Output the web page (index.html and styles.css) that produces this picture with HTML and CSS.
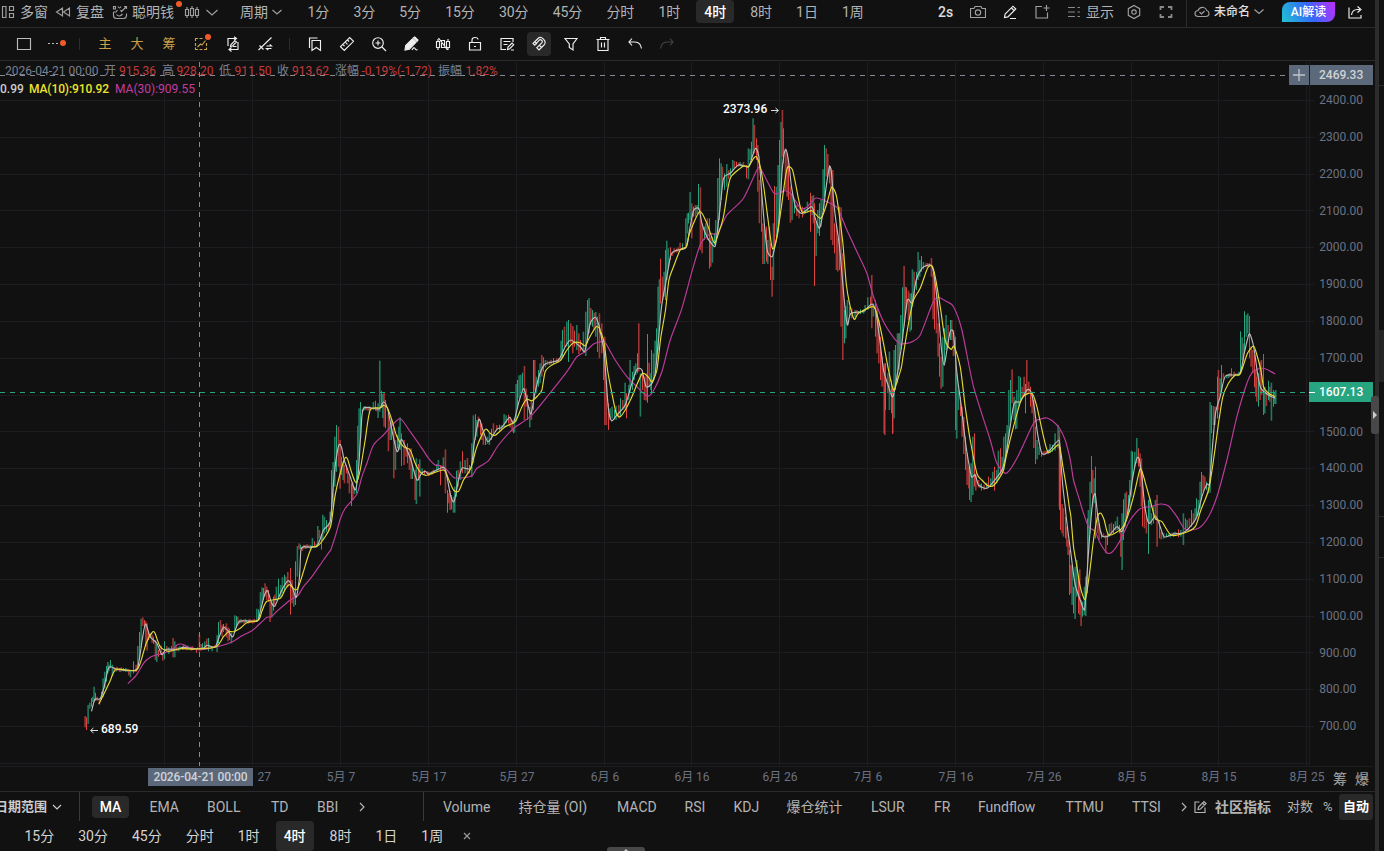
FILE: index.html
```html
<!DOCTYPE html>
<html lang="zh-CN">
<head>
<meta charset="utf-8">
<title>K线图</title>
<link rel="stylesheet" href="styles.css">
</head>
<body>
<div class="app">
<main class="main">
  <header class="topbar">
    <div class="tools-left">
      <svg class="ic dim" viewBox="0 0 16 16"><path d="M2.500 2.500h3.500v11H2.500zM9.500 2.500h4v4h-4zM9.500 9.500h4v4h-4z"/></svg>
      <span>多窗</span>
      <svg class="ic dim" viewBox="0 0 16 16"><path d="M7.500 4v8L1.500 8zM14.500 4v8L8.500 8z"/></svg>
      <span>复盘</span>
      <svg class="ic dim" viewBox="0 0 16 16"><path d="M1.500 8v3.500q0 3 3 3h7q3 0 3-3V9.500M1.500 8h2.500l1.500-2M4.500 10.500q1.500 1.800 3 1.500t3-2M1.500 2.500h2v2.500h-2zM6 2.500q1.500 3 3 0M12 2.500h2.500V5M14.500 2.500L9.500 7.500l-1-1.500"/></svg>
      <span class="smart">聪明钱<i class="dot"></i></span>
      <svg class="ic dim" viewBox="0 0 16 16"><path d="M1.500 5.500h3v6h-3zM6.500 4.500h3v7h-3zM11.500 5.500h3v6h-3zM3 3v2.500M3 11.500V14M8 2v2.500M8 11.500V14M13 3v2.500M13 11.500V14"/></svg>
      <svg class="ic dim" viewBox="0 0 16 16"><path d="M2.500 6l5.500 5 5.500-5"/></svg>
      <span>周期</span>
      <svg class="ic dim" viewBox="0 0 16 16"><path d="M3.500 6l4.500 4 4.500-4"/></svg>
    </div>
    <nav class="periods">
      <span>1分</span><span>3分</span><span>5分</span><span>15分</span><span>30分</span><span>45分</span><span>分时</span><span>1时</span><span class="on">4时</span><span>8时</span><span>1日</span><span>1周</span>
    </nav>
    <div class="tools-right">
      <b class="sec">2s</b>
      <svg class="ic dim" viewBox="0 0 16 16"><path d="M.500 4.500h3.500l1-2h6l1 2h3.500v9H.500z"/><circle cx="8" cy="8.500" r="2.700"/></svg>
      <svg class="ic lit" viewBox="0 0 16 16"><path d="M2.500 13.500l.6-3.400L11 2.200l2.800 2.800-7.900 7.900zM9.500 4l2.500 2.500M8 14.500h6"/></svg>
      <svg class="ic dim" viewBox="0 0 16 16"><path d="M8 2.500H2v11.500h11.500V8.500M12.500 1v6M9.500 4h6"/></svg>
      <svg class="ic faint" viewBox="0 0 16 16"><path d="M2 3.500h7M2 8h7M2 12.500h7M11.500 3.500h2.500M11.500 8h2.500M11.500 12.500h2.500"/></svg>
      <span>显示</span>
      <svg class="ic dim" viewBox="0 0 16 16"><path d="M8 1.500l5.700 3.200v6.600L8 14.500l-5.700-3.200V4.700z"/><circle cx="8" cy="8" r="2.200"/></svg>
      <svg class="ic faint thick" viewBox="0 0 16 16"><path d="M2.500 6V3H6M10 3h3.500v3M13.500 10v3H10M6 13H2.500v-3"/></svg>
    </div>
    <div class="account">
      <svg class="ic dim" viewBox="0 0 16 16"><path d="M4.500 12.500C2 12.500 1 11 1 9.500S2.300 6.800 4 6.500C5 4 7 3 9.500 3.500s3 2 3.200 3C14.500 7 15 8 15 9.500s-1.200 3-3.500 3zM5.500 8l2 2 3-3"/></svg>
      <span class="name">未命名</span>
      <svg class="ic dim" viewBox="0 0 16 16"><path d="M3.500 5.500l4.500 4 4.500-4"/></svg>
      <b class="ai">AI解读</b>
      <svg class="ic lit" viewBox="0 0 16 16"><path d="M2 3.500v10.500h12v-3M4.500 11c.5-4 3-5.500 6-5.500H13M10.500 2.500l3.500 3-3.500 3"/></svg>
    </div>
  </header>

  <div class="drawbar">
    <div class="group">
      <i><svg class="ic" viewBox="0 0 16 16"><path d="M1.500 2.500h13v11h-13z"/></svg></i>
      <i class="more"><svg class="ic" viewBox="0 0 16 16"><path d="M0 7.500h2M4 7.500h2M8 7.500h2"/></svg><em class="dot"></em></i>
    </div>
    <s></s>
    <div class="group gold">
      <i>主</i><i>大</i><i>筹</i>
      <i class="badge"><svg class="ic" viewBox="0 0 16 16"><path d="M5 2.500H2.500V5M2.500 7v3M2.500 11.500v2H5M6.500 13.500h3M11 13.500h2.500v-2M13.500 10V7M6.500 2.500h3M4.500 11l3-3 1.500 1 3.500-4.500"/></svg><em class="dot"></em></i>
      <i><svg class="ic white" viewBox="0 0 16 16"><path d="M3 10V2.500h8M9 .700l2.500 1.800L9 4.300M13 6v7.500H4M6.500 11.500L4 13.500l2.500 2M5.500 10.500l.5-2 4-4 1.500 1.500-4 4zM8 10.500h3.500"/></svg></i>
      <i><svg class="ic white" viewBox="0 0 16 16"><path d="M1.500 14L14.500 1.500M2.500 9.500l4 4M9.500 10h5l-1.800-1.500M14.500 12.500h-5l1.800 1.500"/></svg></i>
    </div>
    <s class="wide"></s>
    <div class="group white">
      <i><svg class="ic" viewBox="0 0 16 16"><path d="M5 4.500h8.500v10L9.300 11.500 5 14.500zM2.500 12V2h8"/></svg></i>
      <i><svg class="ic" viewBox="0 0 16 16"><path d="M1.500 10.700l9.200-9.200 3.800 3.800-9.200 9.200zM4 8.500l1.500 1.500M6.300 6.200l2.200 2.200M8.500 4l1.500 1.500"/></svg></i>
      <i><svg class="ic" viewBox="0 0 16 16"><circle cx="7" cy="7" r="5.300"/><path d="M11 11l4 4M4.500 7h5M7 4.500v5"/></svg></i>
      <i><svg class="ic" viewBox="0 0 16 16"><path class="solid" d="M2 14l.7-4.500L9.500 2.700 13 6.200l-6.600 6.900zM10.500 1.800l1.300-.8 3.200 3-1 1.300z"/><path d="M9 14q2-3.500 3-1.500t2.500 1"/></svg></i>
      <i><svg class="ic" viewBox="0 0 16 16"><path d="M1.500 5.500h3v6h-3zM6.500 4.500h3v7h-3zM11.500 5.500h3v6h-3zM3 3v2.500M3 11.500V14M13 3v2.500M13 11.500V14M3.500 2l9 12"/></svg></i>
      <i><svg class="ic" viewBox="0 0 16 16"><path d="M2.500 6.500h11v7.500h-11zM5 6.500V4q0-2.500 3-2.500t3 2M7 10.500h2"/></svg></i>
      <i><svg class="ic" viewBox="0 0 16 16"><path d="M14 6V2.500H2v11h5M4.500 5.500h7M4.500 8.500h4M8.500 13.500l.5-2.500 4-4 1.700 1.700-4 4zM12 14h3"/></svg></i>
      <i class="on"><svg class="ic" viewBox="0 0 16 16"><path d="M2 7.500l5-5c3-3 9.500 2.500 6 6.500l-5 5-2.200-2.200 5-5c1.500-2-1-4-2.600-2.600l-4.500 5zM3.800 5.700L6 8M8.500 9.500l2.200 2.200"/></svg></i>
      <i><svg class="ic" viewBox="0 0 16 16"><path d="M2 2.500h12L10 8v6L6.300 11.500V8z"/></svg></i>
      <i><svg class="ic" viewBox="0 0 16 16"><path d="M1.500 3.500h13M5.500 3.500v-2h5v2M3 3.500v11h10v-11M6.500 6.500v5M9.500 6.500v5"/></svg></i>
      <i><svg class="ic" viewBox="0 0 16 16"><path d="M5 2.500L2 6l3 3.500M2 6h6q5.500 0 6.500 6.500"/></svg></i>
      <i class="off"><svg class="ic" viewBox="0 0 16 16"><path d="M11 2.500L14 6l-3 3.500M14 6H8q-5.500 0-6.500 6.500"/></svg></i>
    </div>
  </div>

  <svg class="chart" id="chart" viewBox="0 61 1375 730" width="1375" height="730">
    <g id="grid" class="grid"></g>
    <g id="bars"></g>
    <g id="lines" class="lines"></g>
    <path class="cross" d="M0 75.500H1289M199.500 62V766"/>
    <path class="last" d="M0 392.500H1309"/>
    <g class="legend">
      <text x="5" y="75">2026-04-21 00:00</text>
      <text x="104" y="75">开</text><text class="red" x="119" y="75">915.36</text>
      <text x="162" y="75">高</text><text class="red" x="176.500" y="75">928.20</text>
      <text x="219" y="75">低</text><text class="red" x="234.500" y="75">911.50</text>
      <text x="277" y="75">收</text><text class="red" x="292" y="75">913.62</text>
      <text x="335" y="75">涨幅</text><text class="red" x="361.500" y="75">-0.19%(-1.72)</text>
      <text x="438" y="75">振幅</text><text class="red" x="465.500" y="75">1.82%</text>
      <text class="ma5" x="0" y="93">0.99</text>
      <text class="ma10" x="29" y="93" textLength="80">MA(10):910.92</text>
      <text class="ma30" x="115" y="93" textLength="80">MA(30):909.55</text>
    </g>
    <g class="peak">
      <text x="723" y="113">2373.96</text><path d="M771 110.500h7M775.500 108l3 2.500-3 2.500"/>
      <text x="101" y="733">689.59</text><path d="M98 730.500h-7M93.500 728l-3 2.500 3 2.500"/>
    </g>
    <g id="axis" class="axis"></g>
    <path class="tag" d="M1289 65h20v20h-20zM1310 65h63v20h-63z"/>
    <path class="plus" d="M1293 75h12M1299 69v12"/>
    <text class="tagtext" x="1319" y="79">2469.33</text>
    <path class="lasttag" d="M1309 382h64v20h-64z"/>
    <path class="tick" d="M1309 392.500h6"/>
    <text class="lasttext" x="1319" y="396">1607.13</text>
    <path class="tag" d="M148 768h105v18H148z"/>
    <text class="tagtext" x="153.500" y="781" textLength="94">2026-04-21 00:00</text>
    <g class="corner"><text x="1333" y="783.500">筹</text><text x="1355" y="783.500">爆</text></g>
  </svg>

  <div class="indicators">
    <div class="range"><span>日期范围</span><svg class="ic" viewBox="0 0 16 16"><path d="M4 6l4 4 4-4"/></svg></div>
    <div class="overlays">
      <b class="on">MA</b><span>EMA</span><span>BOLL</span><span>TD</span><span>BBI</span><svg class="ic" viewBox="0 0 16 16"><path d="M6 4l4 4-4 4"/></svg>
    </div>
    <div class="subs">
      <span>Volume</span><span>持仓量 (OI)</span><span>MACD</span><span>RSI</span><span>KDJ</span><span>爆仓统计</span><span>LSUR</span><span>FR</span><span>Fundflow</span><span>TTMU</span><span>TTSI</span>
      <svg class="ic" viewBox="0 0 16 16"><path d="M6 4l4 4-4 4"/></svg>
      <svg class="ic" viewBox="0 0 16 16"><path d="M7.500 3H3v10.500h10V8.500M6 10.500l.5-2.500L12 2.500l2 2L8.500 10zM10.500 4l2 2"/></svg>
      <b>社区指标</b><span class="small">对数</span><span class="small">%</span><b class="auto">自动</b>
    </div>
  </div>

  <footer class="bottombar">
    <nav class="periods">
      <span>15分</span><span>30分</span><span>45分</span><span>分时</span><span>1时</span><span class="on">4时</span><span>8时</span><span>1日</span><span>1周</span>
    </nav>
    <svg class="ic close" viewBox="0 0 16 16"><path d="M5 5l6 6M11 5l-6 6"/></svg>
    <div class="pull"></div>
  </footer>
</main>
<div class="scroll"><div class="collapse"></div></div>
<aside class="side"><div class="s1"></div><div class="s2"></div><div class="s3"></div><div class="s4"></div><div class="s5"></div></aside>
</div>
<script src="chart.js"></script>
</body>
</html>
```

FILE: styles.css
```css
* { box-sizing: border-box; }
body { margin: 0; background: #111; color: #b4b4b4; font: 14px/20px Roboto, "Noto Sans CJK SC", sans-serif; overflow: hidden; }
i, em { font-style: normal; }
s { text-decoration: none; }
.app { display: flex; width: 1384px; height: 851px; }
.main { width: 1375px; height: 851px; display: flex; flex-direction: column; overflow: hidden; }
.ic { width: 16px; height: 16px; flex: none; fill: none; stroke: currentColor; stroke-width: 1.15; display: block; }
.ic .solid { fill: currentColor; }
.dim { color: #a0a0a0; }
.faint { color: #888; }
.lit { color: #eee; }
.thick { stroke-width: 1.8; }
.dot { position: absolute; width: 6px; height: 6px; border-radius: 50%; background: #f05a28; }

.topbar { height: 28px; flex: none; border-bottom: 1px solid #2b2b2b; display: flex; white-space: nowrap; }
.tools-left { width: 299.500px; height: 24px; display: grid; align-items: center; grid-template-columns: 20px 35px 21px 36px 20px 52px 20px 36px 29px 20px; }
.smart { position: relative; }
.smart .dot { left: 44px; top: -1px; }
.periods { display: flex; gap: 8px; }
.periods span { padding: 0 8px; height: 24px; line-height: 24px; border-radius: 4px; }
.periods .on { color: #fff; background: #292929; font-weight: 500; }
.topbar .periods .on { height: 23px; }
.tools-right { margin-left: auto; width: 248px; height: 24px; display: grid; align-items: center; grid-template-columns: 32px 32px 32px 32px 20px 40px 32px 16px; }
.sec { color: #ddd; font-weight: 500; }
.account { width: 189px; height: 27px; padding: 0 0 3px 7px; border-left: 1px solid #2b2b2b; display: grid; align-items: center; grid-template-columns: 20px 37px 31px 65px 16px; }
.name { font-size: 12px; color: #e0e0e0; font-weight: 500; }
.ai { width: 53px; height: 20px; line-height: 20px; text-align: center; color: #fff; font-size: 12px; font-weight: 500; border-radius: 8px 0 8px 0; background: linear-gradient(65deg, #20c4d0, #3568fa 52%, #c22cff); }

.drawbar { height: 33px; flex: none; border-bottom: 1px solid #2b2b2b; display: flex; align-items: center; padding-left: 12px; }
.group { display: flex; gap: 8px; color: #bbb; }
.group i { width: 24px; height: 24px; display: flex; align-items: center; justify-content: center; border-radius: 4px; position: relative; font-size: 13px; }
.drawbar s { flex: none; width: 1px; height: 12px; background: #2c2c2c; margin: 0 13px 0 11px; }
.drawbar .wide { margin-left: 12px; }
.gold { color: #c9a14a; }
.white { color: #eee; }
.group .on { background: #292929; }
.group .off { color: #444; }
.more .dot { left: 16px; top: 8px; }
.badge .dot { left: 16px; top: 2px; }

.chart { display: block; flex: none; font: 12px Roboto, "Noto Sans CJK SC", sans-serif; }
.grid { stroke: #1d1d21; fill: none; shape-rendering: crispEdges; }
.lines { fill: none; stroke-width: 1.15; stroke-linejoin: round; }
.lines .w { stroke: #bcbcbc; }
.lines .y { stroke: #e4da34; }
.lines .p { stroke: #bd3c9d; }
.up { fill: #25a47e; }
.down { fill: #dd4340; }
.soft { opacity: .7; }
.cross { stroke: #858994; stroke-dasharray: 5 5; fill: none; shape-rendering: crispEdges; }
.last { stroke: #25a47e; stroke-dasharray: 5 5; shape-rendering: crispEdges; }
.legend { fill: #7b8090; }
.legend .red { fill: #c13c3c; }
.legend .ma5 { fill: #ccc; font-weight: 500; }
.legend .ma10 { fill: #eee32d; font-weight: 500; }
.legend .ma30 { fill: #c33ca2; }
.peak { fill: #fff; font-weight: 500; }
.peak path { fill: none; stroke: #ddd; }
.axis { fill: #6b7283; }
.tag { fill: #5c697b; }
.plus { stroke: #c0c5ca; stroke-width: 1.3; }
.tagtext { fill: #ced2d7; font-weight: 500; }
.lasttag { fill: #26a580; }
.tick { stroke: #fff; }
.lasttext { fill: #fff; font-weight: 500; }
.corner { fill: #999; font-size: 14px; font-weight: 500; }

.indicators { height: 30px; flex: none; border-top: 1px solid #2b2b2b; display: flex; white-space: nowrap; overflow: hidden; }
.range { width: 80px; flex: none; border-right: 1px solid #3a3a3a; display: flex; align-items: center; justify-content: flex-end; font-size: 13px; font-weight: 700; color: #ccc; padding-right: 14px; gap: 2px; }
.overlays { width: 344px; border-right: 1px solid #3a3a3a; display: grid; align-items: center; grid-template-columns: 57.500px 57.500px 64px 46px 37px 16px; padding-left: 12px; }
.overlays .on { background: #292929; color: #fff; font-weight: 500; border-radius: 4px; width: 37px; height: 22px; line-height: 22px; text-align: center; }
.subs { display: grid; align-items: center; grid-template-columns: 75.500px 98.500px 67.500px 49px 53px 84.500px 63px 44px 87.500px 66.500px 44px 16px 23px 72px 36px 16px 34px; padding-left: 19px; }
.subs b { font-weight: 600; }
.subs .small { font-size: 13px; }
.subs .auto { background: #292929; color: #fff; width: 34px; height: 26px; line-height: 26px; text-align: center; border-radius: 3px; font-size: 13px; }

.bottombar { height: 30px; display: flex; align-items: center; padding-left: 16.500px; position: relative; color: #d4d4d4; }
.bottombar .periods span { height: 30px; line-height: 30px; }
.close { margin-left: 8px; color: #999; }
.pull { position: absolute; left: 607px; top: 26px; width: 38px; height: 6px; background: #484848; border-radius: 3px 3px 0 0; }
.pull::after { content: ""; position: absolute; left: 16px; top: 2px; border: 3px solid transparent; border-top: 0; border-bottom-color: #ccc; }
.scroll { width: 4px; background: #2c2c2c; position: relative; }
.collapse { position: absolute; left: -4px; top: 396px; width: 8px; height: 38px; background: #484848; border-radius: 3px; }
.collapse::after { content: ""; position: absolute; left: 2px; top: 15px; border: 4px solid transparent; border-left-color: #ccc; border-right: 0; }
.side { width: 5px; display: grid; grid-template-rows: 86px 244px 52px 135px 41px; align-content: start; }
.s1, .s4, .s5 { border-bottom: 1px solid #2b2b2b; }
.s3 { background: #242424; }
```

FILE: chart.js
```js
// Each segment is drawn at its own origin, three units to a pixel.
const segments = [
{ x: 60, y: 540,
w: "94,514 104,478 120,476 132,440 146,382 170,388 208,392 232,384 246,300 256,252 270,290 290,310 305,344 318,328 350,328 370,322 400,326 430,324 440,316 465,320 478,288 490,262 505,274 518,290 538,244 590,244 600,215 612,168 622,152 634,188 644,198 665,150 684,122 696,140 708,172 718,110 722,30 732,20",
l: "116,492 134,456 150,422 168,388 225,392 240,370 258,310 276,277 284,279 300,320 325,334 360,326 410,327 468,320 490,290 505,275 520,275 540,265 560,248 595,240 605,214 620,184 660,175 675,148 688,134 706,150 715,140 728,100 745,45 755,20",
p: "203,431 228,406 250,370 270,352 290,344 310,340 340,326 350,315 360,312 372,314 385,322 430,328 470,320 500,312 520,304 540,290 575,272 600,250 620,232 634,230 650,214 690,180 712,168 730,140 755,110 790,60 808,35 812,29",
b: "75 528 562 r,80 532 570 r,84 495 552 g,89 488 506 g,94 474 500 g,98 470 486 g,102 440 484 g,107 458 482 g,111 470 482 r,118 475 494 r,124 455 480 g,129 415 472 g,134 395 445 g,138 378 425 g,143 366 400 g,147 374 392 g,152 360 384 g,157 374 408 g,162 382 396 r,190 384 394 r,206 388 406 r,211 390 412 g,220 364 400 g,228 374 396 r,233 318 380 g,238 276 360 g,243 236 322 g,248 232 258 r,252 240 260 r,257 244 320 r,261 250 332 r,266 276 300 r,271 280 295 g,276 284 308 r,281 290 312 r,286 300 360 r,290 310 366 g,295 330 350 r,303 316 345 r,308 335 362 r,313 304 358 g,320 318 336 r,326 322 342 g,334 318 334 r,339 294 352 r,344 304 352 g,408 324 338 r,418 284 334 r,423 312 332 r,428 310 326 g,434 304 328 g,440 296 326 r,444 294 334 g,456 322 334 g,471 286 336 g,476 246 310 g,481 240 282 r,486 254 290 r,490 252 276 g,499 250 292 r,504 262 304 r,509 266 300 r,514 278 310 g,524 226 276 g,529 228 264 g,533 230 256 r,590 206 246 g,595 208 240 g,601 156 215 g,606 142 190 g,611 144 180 g,615 130 170 r,620 140 180 r,625 150 186 r,630 178 246 r,635 180 232 g,639 170 212 g,644 164 200 r,649 140 182 g,656 116 170 g,662 135 170 g,667 112 160 g,672 104 148 g,677 110 140 r,683 96 140 r,690 84 224 r,696 120 190 r,701 150 200 g,706 64 195 g,712 18 110 g,717 10 28 r,722 14 26 g" },
{ x: 300, y: 340,
w: "12,620 50,618 70,570 90,545 98,450 106,370 116,315 124,322 132,360 150,410 165,450 174,400 182,280 190,205 235,207 250,186 262,205 275,270 290,334 297,320 304,298 318,325 332,360 350,420 364,400 376,394 386,402 430,382 440,410 452,470 462,484 475,420 486,384 512,384 522,310 536,238 548,270 564,305 590,268 605,262 628,232 640,248 655,190 670,146 680,180 692,222 704,160 718,104 735,72 775,60 795,20 812,0 840,20 853,35 861,0 870,-50 885,-68 896,-45 905,0",
l: "35,620 52,618 75,590 92,555 104,470 120,400 134,355 142,357 155,400 168,428 180,390 195,300 210,210 240,204 250,196 262,205 275,240 290,290 310,320 330,330 345,370 360,396 378,406 430,390 445,418 460,450 475,454 490,420 512,384 530,320 555,268 570,280 585,286 615,260 645,245 665,200 680,178 695,182 712,168 725,150 735,95 755,75 780,62 800,30 820,8 840,8 855,18 864,0 875,-20 888,-40 898,-35 900,-22",
p: "92,629 105,590 120,538 135,505 170,462 185,410 200,370 220,315 250,285 270,262 300,236 330,275 365,325 385,355 405,375 420,377 440,390 465,414 514,408 530,385 565,362 595,315 640,265 690,230 745,165 800,95 830,50 855,35 880,12 900,5",
b: "37 594 622 g,42 604 620 r,53 558 618 g,58 570 595 r,63 582 629 r,68 524 600 g,73 530 580 g,80 540 575 g,85 548 572 r,90 515 560 g,95 390 530 g,99 366 500 g,104 290 440 g,110 255 395 g,115 260 380 r,120 300 446 r,124 350 405 r,129 365 420 g,133 375 430 r,138 375 400 r,143 395 430 r,148 410 460 r,153 430 498 g,158 425 480 r,163 440 462 g,168 360 460 g,173 257 420 g,177 205 350 g,181 186 300 g,186 208 215 r,220 186 210 g,226 182 212 r,234 190 234 g,239 62 215 g,243 152 200 r,248 162 234 g,252 158 260 r,257 180 265 r,265 220 334 r,270 250 300 g,275 240 300 r,281 262 415 r,286 300 390 g,291 285 325 g,296 260 330 g,300 232 330 g,305 280 378 r,312 300 375 r,318 320 350 r,323 310 370 r,328 325 390 r,333 325 417 r,338 375 417 g,345 390 480 r,349 355 492 g,354 372 420 r,359 358 470 g,366 385 405 g,374 390 404 r,410 372 395 g,415 360 390 g,422 375 436 r,430 352 392 g,436 328 460 r,441 450 518 g,446 460 490 r,450 452 510 r,455 465 508 r,460 470 518 g,464 440 518 g,469 392 470 g,474 390 440 r,481 364 420 g,488 334 400 r,495 360 400 g,502 354 405 r,508 375 400 g,515 310 412 g,520 226 370 g,525 222 300 r,530 240 290 g,535 230 262 r,540 240 285 r,545 250 300 r,550 280 315 r,556 292 315 g,562 290 312 g,568 278 315 g,574 266 300 g,580 250 280 r,590 255 270 r,598 254 272 g,612 222 262 g,618 226 250 g,625 224 250 r,630 230 262 r,636 240 275 r,640 262 280 r,643 235 278 g,648 132 245 g,652 120 200 g,657 106 175 g,662 104 160 g,668 98 150 g,673 78 240 r,678 145 200 r,683 165 240 r,689 200 262 g,694 180 240 r,700 60 210 g,704 60 150 r,709 110 160 g,714 90 140 g,720 70 130 g,725 45 110 r,730 52 95 r,736 60 82 g,742 62 75 r,760 54 72 g,770 55 68 r,783 2 60 g,788 -30 50 g,793 -40 20 r,800 -55 20 g,805 -60 66 g,812 -50 10 r,818 -42 40 r,824 -28 20 r,830 -45 30 g,836 -20 42 r,842 0 34 r,850 -25 30 g,857 -85 48 g,862 -120 0 g,867 -126 -20 g,872 -96 -45 r,877 -90 -40 g,882 -82 -30 r,887 -84 -10 g,892 -70 36 r,898 -80 55 r" },
{ x: 600, y: 90,
w: "5,750 12,790 24,950 34,992 50,975 75,945 95,880 110,838 125,840 138,890 155,880 165,850 174,760 184,650 200,560 212,495 225,482 258,472 268,420 280,362 296,356 305,400 320,440 335,462 345,468 352,420 360,350 370,265 390,250 415,225 445,230 456,200 466,175 476,200 484,300 494,420 502,485 516,500 524,470 534,420 540,330 546,240 552,190 558,180 566,220 574,290 586,350 605,370 635,350 645,385 658,415 668,370 678,290 688,230 694,250 700,330 708,400 718,470 726,560 734,650 742,705 752,670 790,664 815,642 828,670 840,760 850,840 862,880 878,920 892,850 900,795",
l: "3,728 12,760 22,840 35,910 48,970 60,980 75,960 95,920 125,852 145,862 155,875 170,840 182,740 196,660 206,570 220,530 240,480 258,470 268,430 298,365 320,400 342,458 355,430 370,380 384,290 394,258 430,228 445,230 458,208 468,200 480,230 492,300 505,400 516,474 526,460 538,390 545,340 553,280 562,232 576,238 586,280 605,365 635,362 662,385 680,340 694,292 708,315 718,380 728,460 738,580 748,640 762,688 775,670 820,650 835,690 850,760 865,840 880,900 892,870 900,845",
p: "3,755 15,758 45,810 80,860 110,890 140,918 158,905 185,845 210,750 245,655 275,545 300,465 328,432 352,430 380,375 430,325 470,240 482,238 520,308 540,308 555,302 575,315 600,354 620,352 648,324 700,345 715,360 740,420 775,495 800,550 820,620 850,695 882,745 900,762",
b: "5 700 790 r,10 760 870 r,14 740 1005 r,19 870 1005 r,24 940 1020 r,30 955 990 g,36 950 985 g,42 960 988 g,48 948 990 g,56 945 985 r,62 925 980 g,68 930 960 r,75 878 955 g,80 910 985 r,86 885 930 g,90 810 905 g,96 845 900 g,102 828 870 g,107 820 855 g,112 790 850 g,116 700 845 r,121 850 980 g,127 840 900 r,133 860 930 r,138 850 932 r,142 732 938 g,147 818 890 r,152 850 900 g,155 780 910 g,160 790 870 g,165 752 850 g,169 715 820 g,174 590 780 g,178 568 700 g,182 506 640 r,187 560 630 r,192 545 620 g,196 480 630 g,200 452 570 g,205 475 530 g,210 472 510 r,222 475 490 r,240 458 480 r,248 460 480 g,257 385 470 g,262 370 430 g,266 368 400 g,270 306 390 g,275 340 445 r,280 350 380 g,286 345 380 r,291 345 372 g,296 282 360 g,301 292 480 r,306 400 490 r,312 410 450 g,317 400 435 g,322 385 450 r,327 385 536 r,332 440 530 r,337 440 518 g,342 430 465 g,347 390 460 g,353 264 430 g,358 205 390 g,363 220 330 g,367 230 290 r,372 250 300 g,380 222 290 g,386 240 268 r,392 235 260 g,398 210 240 g,403 213 235 r,410 215 232 r,420 216 228 g,430 216 230 r,438 225 265 r,445 175 268 g,450 178 210 g,455 155 205 g,459 85 190 g,463 105 190 r,468 145 210 r,473 165 305 r,478 270 400 r,483 300 425 r,488 400 522 r,493 415 522 g,498 410 515 r,503 450 522 g,508 410 500 r,512 460 570 r,516 530 620 r,520 400 570 g,524 288 470 r,529 290 440 g,534 225 420 g,538 150 370 g,543 96 310 g,547 60 200 r,551 115 220 r,556 175 300 r,561 190 320 r,566 220 330 r,571 290 398 r,576 310 390 g,582 330 370 g,590 345 378 r,597 355 385 r,606 350 382 r,614 355 372 g,622 335 368 g,630 308 425 r,636 318 375 g,640 315 400 r,644 340 588 r,648 395 498 g,653 360 430 g,658 340 438 g,663 330 410 g,669 238 360 g,674 165 320 g,678 175 260 r,683 192 260 r,688 225 280 g,693 235 450 r,698 240 465 r,704 400 490 r,709 405 540 r,713 445 545 r,718 350 540 r,723 352 710 r,728 490 810 r,732 660 760 g,737 648 745 g,742 630 700 g,747 650 680 r,755 655 685 r,765 660 682 g,780 658 672 g,795 645 665 g,803 622 660 g,810 620 650 r,815 555 715 r,820 640 680 g,825 630 740 r,831 650 790 r,836 690 820 r,841 740 870 r,846 800 890 r,852 820 1030 r,857 820 960 g,863 850 910 r,868 785 960 g,873 870 970 r,878 900 1030 r,882 780 985 g,887 765 900 g,892 730 880 g,897 730 830 r" },
{ x: 840, y: 240,
w: "184,320 190,270 202,180 216,188 228,120 245,85 262,76 275,78 285,130 295,220 304,330 312,376 320,330 330,275 340,280 350,400 362,490 375,600 384,660 394,710 405,705 415,735 440,745 460,725 485,690 498,640 510,560 522,490 540,485 560,450 572,455 582,500 592,580 605,640 625,635 656,600 660,640 668,740 675,800",
l: "184,380 190,340 205,250 220,180 240,145 262,85 275,78 285,110 300,200 315,300 332,328 342,320 360,380 375,500 390,600 410,700 425,720 445,738 462,735 488,695 500,640 520,560 545,475 575,460 590,500 610,590 625,638 656,615 668,680 680,750 688,805",
p: "184,312 212,307 240,285 275,195 292,172 320,185 340,200 365,270 400,440 450,600 470,670 498,700 530,655 580,550 600,538 620,534 640,545 658,565 675,600 687,645",
b: "134 375 585 r,156 440 582 r,177 280 390 g,182 225 330 g,187 142 300 g,192 78 260 r,196 140 220 g,200 142 205 r,205 152 240 r,210 160 275 g,214 160 270 g,217 88 200 g,222 95 170 r,228 95 150 g,234 36 120 g,239 60 110 g,244 48 95 g,250 66 88 g,258 70 82 r,268 70 80 g,274 54 110 r,279 100 238 r,284 120 268 r,289 180 280 r,294 250 350 r,298 310 410 r,303 350 446 r,308 290 440 g,313 265 370 g,318 225 330 g,324 255 320 r,330 240 300 g,335 240 300 r,340 270 348 r,345 290 570 r,350 400 596 g,355 450 510 g,360 470 528 r,366 500 590 r,371 530 642 r,376 590 690 r,381 640 735 r,386 680 745 r,389 680 780 r,393 670 786 g,398 590 765 g,402 580 740 r,407 700 752 r,415 720 742 r,424 730 752 r,432 735 750 r,440 728 745 g,446 710 740 r,452 715 740 g,458 695 738 g,463 680 752 r,470 690 730 g,475 632 720 g,480 625 705 r,486 650 700 g,491 590 690 g,496 580 660 g,501 555 640 g,506 450 590 g,511 420 545 g,516 388 490 r,522 470 540 g,526 480 568 r,530 450 566 g,536 408 500 g,541 412 480 g,546 440 475 r,552 410 470 r,556 432 520 g,560 360 465 r,566 425 460 r,571 440 500 r,576 455 520 r,581 480 624 r,586 560 672 r,591 600 658 g,597 620 645 g,605 635 650 r,615 632 645 r,630 612 638 g,636 615 635 g,645 580 632 g,654 555 625 g,659 590 810 r" },
{ x: 1040, y: 300,
w: "78,650 84,700 92,760 104,850 120,900 133,930 138,860 146,740 152,660 158,600 165,582 172,640 184,705 205,708 230,680 244,695 258,660 268,600 278,530 290,475 298,480 306,540 314,620 326,670 345,648 355,665 372,710 400,702 430,698 450,680 470,650 485,590 500,553 508,550 516,450 526,340 540,290 556,228 598,222 612,160 626,103 634,115 642,150 652,220 662,265 685,285 705,295",
l: "92,650 100,740 110,800 120,860 135,898 148,820 160,720 172,650 182,640 192,660 206,705 245,685 262,650 280,590 298,512 304,510 316,550 330,600 345,655 365,665 392,705 430,700 465,680 482,630 505,570 520,480 535,370 548,290 565,250 585,225 600,222 622,160 640,138 650,165 662,210 670,260 685,280 705,290",
p: "92,490 100,540 115,590 130,640 145,680 165,695 180,730 200,758 215,757 235,730 250,700 270,660 300,626 330,620 360,612 385,618 410,650 435,688 475,685 505,650 530,590 560,480 590,350 620,250 638,215 655,206 675,206 705,222",
b: "58 390 620 r,62 440 690 r,66 612 700 r,70 625 710 r,75 650 715 r,80 680 740 r,84 720 765 r,88 750 885 r,92 795 880 r,96 800 915 g,101 860 940 g,105 800 957 g,110 780 890 g,115 830 940 r,119 808 945 r,123 900 978 r,128 905 950 g,133 860 945 g,137 830 948 g,141 655 880 g,145 630 760 g,150 545 700 g,154 468 580 r,158 510 620 r,163 535 610 g,167 500 715 r,172 640 700 r,177 670 720 r,184 695 715 g,190 700 710 r,197 705 760 r,202 700 735 g,208 672 710 g,214 668 700 r,220 672 700 g,226 664 692 g,232 650 690 g,238 675 700 g,242 690 770 r,246 640 810 g,250 598 720 g,255 580 680 g,259 575 660 r,264 585 640 g,269 540 620 g,274 452 590 g,278 455 540 g,284 455 500 g,290 414 490 g,295 445 500 r,300 460 560 r,304 475 620 r,308 520 680 r,313 600 685 r,319 650 700 r,324 600 762 g,329 595 670 g,334 640 675 g,340 620 670 r,346 600 660 g,351 585 740 r,357 660 715 r,363 695 718 r,370 700 716 g,380 700 712 g,395 698 708 r,405 695 708 g,415 688 712 r,422 690 710 g,430 640 735 g,435 655 690 r,441 660 685 g,448 655 680 r,455 630 680 g,460 640 670 r,465 625 660 g,470 595 650 g,475 600 645 g,480 545 625 g,484 516 600 g,489 525 575 r,494 530 565 r,499 545 570 g,505 560 580 g,510 306 578 g,515 315 400 r,520 318 375 g,525 320 375 r,531 230 355 g,535 210 330 r,540 235 290 g,545 195 280 g,550 220 240 r,560 225 235 g,575 205 230 r,582 215 228 r,592 220 228 g,601 94 222 g,606 112 180 g,610 130 185 r,614 34 160 g,619 45 110 g,623 40 100 g,628 48 175 r,633 140 200 r,638 150 220 r,642 165 262 r,647 210 290 r,650 230 305 r,655 220 320 g,660 185 300 r,664 180 285 r,669 162 345 r,674 260 340 g,679 270 318 r,684 242 300 g,689 260 305 r,694 248 362 g,699 270 320 r,703 275 312 g,707 270 312 g" }
];

const byId = id => document.getElementById(id);
let bars = "";
const points = { w: [], l: [], p: [] };
const rect = (x, top, bottom, up, crisp) => {
  const left = crisp ? Math.round(x - 0.5) : x - 0.7;
  const width = crisp ? 1 : 1.6;
  bars += `<rect class="${up ? "up" : "down"}${crisp ? "" : " soft"}" x="${left.toFixed(2)}" y="${top.toFixed(1)}" width="${width}" height="${(bottom - top).toFixed(1)}"/>`;
};

segments.forEach(s => {
  const px = t => t.split(" ").map(q => { const [a, b] = q.split(","); return [s.x + a / 3 + 0.2, s.y + b / 3]; });
  const list = s.b.split(",").map(q => { const v = q.split(" "); return [s.x + v[0] / 3, s.y + v[1] / 3, s.y + v[2] / 3, v[3] === "g"]; });
  const w = px(s.w);
  // Small candles fill quiet stretches along the short average.
  for (let i = 1, k = 0; i < w.length; i++) {
    for (let x = w[i - 1][0]; x < w[i][0]; x += 1.467, k++) {
      if (list.some(v => Math.abs(v[0] - x) < 1.2)) continue;
      const slope = (w[i][1] - w[i - 1][1]) / (w[i][0] - w[i - 1][0]);
      if (Math.abs(slope) > 1.2) continue;
      const y = w[i - 1][1] + slope * (x - w[i - 1][0]);
      rect(x, y - 1 - k * 7 % 3 * .7, y + 1 + k * 5 % 3 * .7, k * 5 % 7 > 3, k % 3 === 0);
    }
  }
  list.forEach((v, i) => rect(...v, i % 3 === 1));
  for (const key in points) points[key].push(...px(s[key]));
});

// Catmull-Rom spline through the average's points.
const curve = pts => pts.slice(1).reduce((d, p, i) => {
  const a = pts[i], before = pts[i - 1] || a, after = pts[i + 2] || p;
  const c = [a[0] + (p[0] - before[0]) / 8, a[1] + (p[1] - before[1]) / 8, p[0] - (after[0] - a[0]) / 8, p[1] - (after[1] - a[1]) / 8, p[0], p[1]];
  return d + "C" + c.map(v => v.toFixed(1)).join(" ");
}, "M" + pts[0].join(" "));
byId("bars").innerHTML = bars;
byId("lines").innerHTML = `<path class="p" d="${curve(points.p)}"/><path class="w" d="${curve(points.w)}"/><path class="y" d="${curve(points.l)}"/>`;

const columns = [164, 252, 340, 428, 516, 604, 691, 779, 867, 955, 1043, 1131, 1218, 1306];
const dates = ["", "", "5月 7", "5月 17", "5月 27", "6月 6", "6月 16", "6月 26", "7月 6", "7月 16", "7月 26", "8月 5", "8月 15", "8月 25"];
let grid = "", axis = '<text x="257.500" y="781">27</text>';
columns.forEach((x, i) => {
  grid += `M${x + .5} 62V766`;
  axis += `<text x="${x + 1}" y="781" text-anchor="middle">${dates[i]}</text>`;
});
for (let i = 0; i < 18; i++) {
  const y = 100.1 + i * 36.83;
  grid += `M0 ${Math.floor(y + .4) + .5}H1314`;
  if (i !== 8) axis += `<text x="1319.300" y="${Math.round(y) + 4}">${2400 - i * 100}.00</text>`;
}
grid += "M0 763.500H1309M0 766.500H1373M1309.500 62V766";
byId("grid").innerHTML = `<path d="${grid}"/>`;
byId("axis").innerHTML = axis;
```
